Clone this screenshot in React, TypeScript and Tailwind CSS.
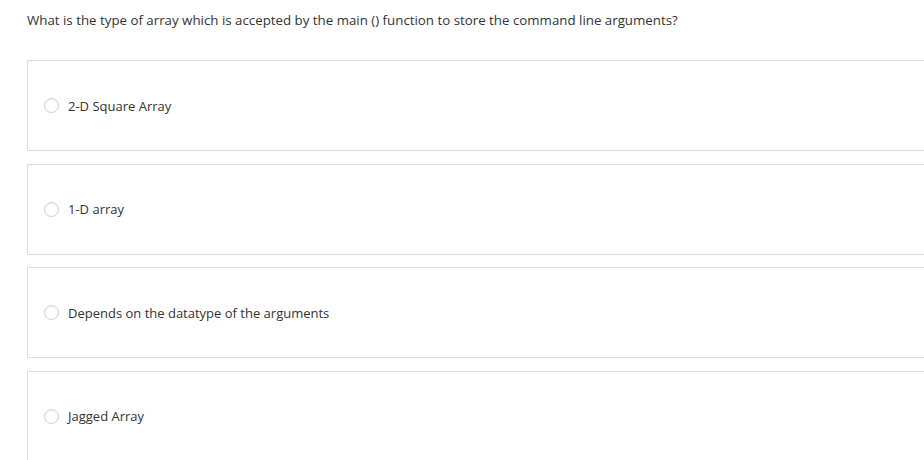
import React from "react";

const options = [
  "2-D Square Array",
  "1-D array",
  "Depends on the datatype of the arguments",
  "Jagged Array",
];

export default function App() {
  return (
    <div
      className="w-[924px] h-[460px] overflow-hidden bg-white text-[#333333]"
      style={{ fontFamily: '"Open Sans", "Noto Sans", sans-serif' }}
    >
      <div className="pl-[27px] pt-[10px] text-[13.3px] leading-[20px]">
        What is the type of array which is accepted by the main () function to store the command line arguments?
      </div>
      <div className="ml-[27px] mt-[30px] w-[1000px] flex flex-col gap-[12.5px]">
        {options.map((o) => (
          <div
            key={o}
            className="h-[91px] border border-[#dcdcdc] flex items-center pl-[16px]"
          >
            <span className="w-[15px] h-[15px] rounded-full border border-[#cfcfcf] bg-white shadow-[inset_0_1px_2px_rgba(0,0,0,0.06)]" />
            <span className="ml-[9px] text-[13px] leading-[20px]">{o}</span>
          </div>
        ))}
      </div>
    </div>
  );
}
